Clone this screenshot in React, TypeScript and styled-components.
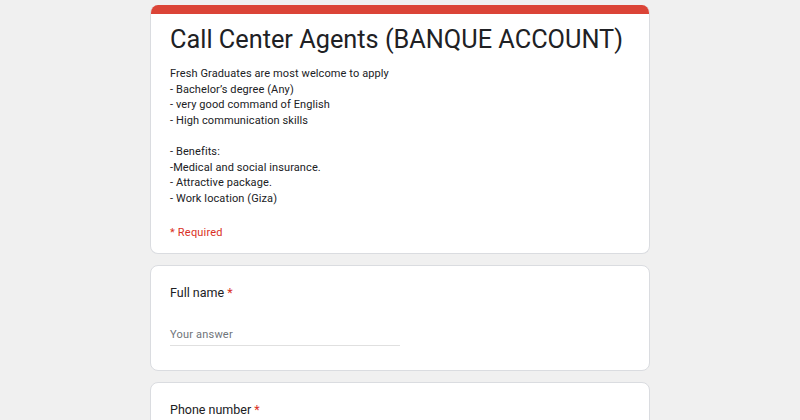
import React from "react";
import styled, { createGlobalStyle } from "styled-components";

const Global = createGlobalStyle`
  html, body { margin: 0; padding: 0; background: #f0f0f0; }
  body { font-family: Roboto, "Noto Sans", Arial, sans-serif; color: #202124; }
  * { box-sizing: border-box; }
`;

const Page = styled.div`
  display: flex;
  flex-direction: column;
  align-items: center;
  gap: 11px;
  padding-top: 5px;
  min-height: 420px;
`;

const Card = styled.div<{ $accent?: boolean }>`
  width: 500px;
  background: #fff;
  border-radius: 8px;
  border: 1px solid #dadce0;
  overflow: hidden;
  ${(p) => (p.$accent ? "border-top: none;" : "")}
`;

const AccentBar = styled.div`
  height: 9px;
  background: #db4437;
`;

const HeaderBody = styled.div`
  padding: 8px 19px 12px 19px;
`;

const Title = styled.h1`
  margin: 0;
  font-weight: 400;
  font-size: 25.3px;
  line-height: 36px;
  white-space: nowrap;
  color: #202124;
  letter-spacing: 0;
`;

const Description = styled.div`
  margin-top: 8px;
  font-size: 11px;
  line-height: 15.6px;
  letter-spacing: 0.1px;
  white-space: pre-wrap;
  color: #202124;
`;

const Required = styled.div`
  margin-top: 18.6px;
  font-size: 11px;
  line-height: 16px;
  letter-spacing: 0.2px;
  color: #d93025;
`;

const QuestionBody = styled.div`
  padding: 17px 19px 24px 19px;
`;

const Label = styled.div`
  font-size: 12.5px;
  line-height: 20px;
  color: #202124;
`;

const Star = styled.span`
  color: #d93025;
  margin-left: 3px;
`;

const Answer = styled.div`
  margin-top: 24px;
  width: 230px;
  border-bottom: 1px solid #e0e0e0;
  font-size: 11px;
  line-height: 16px;
  letter-spacing: 0.2px;
  color: #70757a;
  padding-bottom: 2px;
`;

const desc = `Fresh Graduates are most welcome to apply
- Bachelor’s degree (Any)
- very good command of English
- High communication skills

- Benefits:
-Medical and social insurance.
- Attractive package.
- Work location (Giza)`;

const Question = ({ label }: { label: string }) => (
  <Card>
    <QuestionBody>
      <Label>
        {label}
        <Star>*</Star>
      </Label>
      <Answer>Your answer</Answer>
    </QuestionBody>
  </Card>
);

export default function App() {
  return (
    <>
      <Global />
      <Page>
        <Card $accent>
          <AccentBar />
          <HeaderBody>
            <Title>Call Center Agents (BANQUE ACCOUNT)</Title>
            <Description>{desc}</Description>
            <Required>* Required</Required>
          </HeaderBody>
        </Card>
        <Question label="Full name" />
        <Question label="Phone number" />
      </Page>
    </>
  );
}
